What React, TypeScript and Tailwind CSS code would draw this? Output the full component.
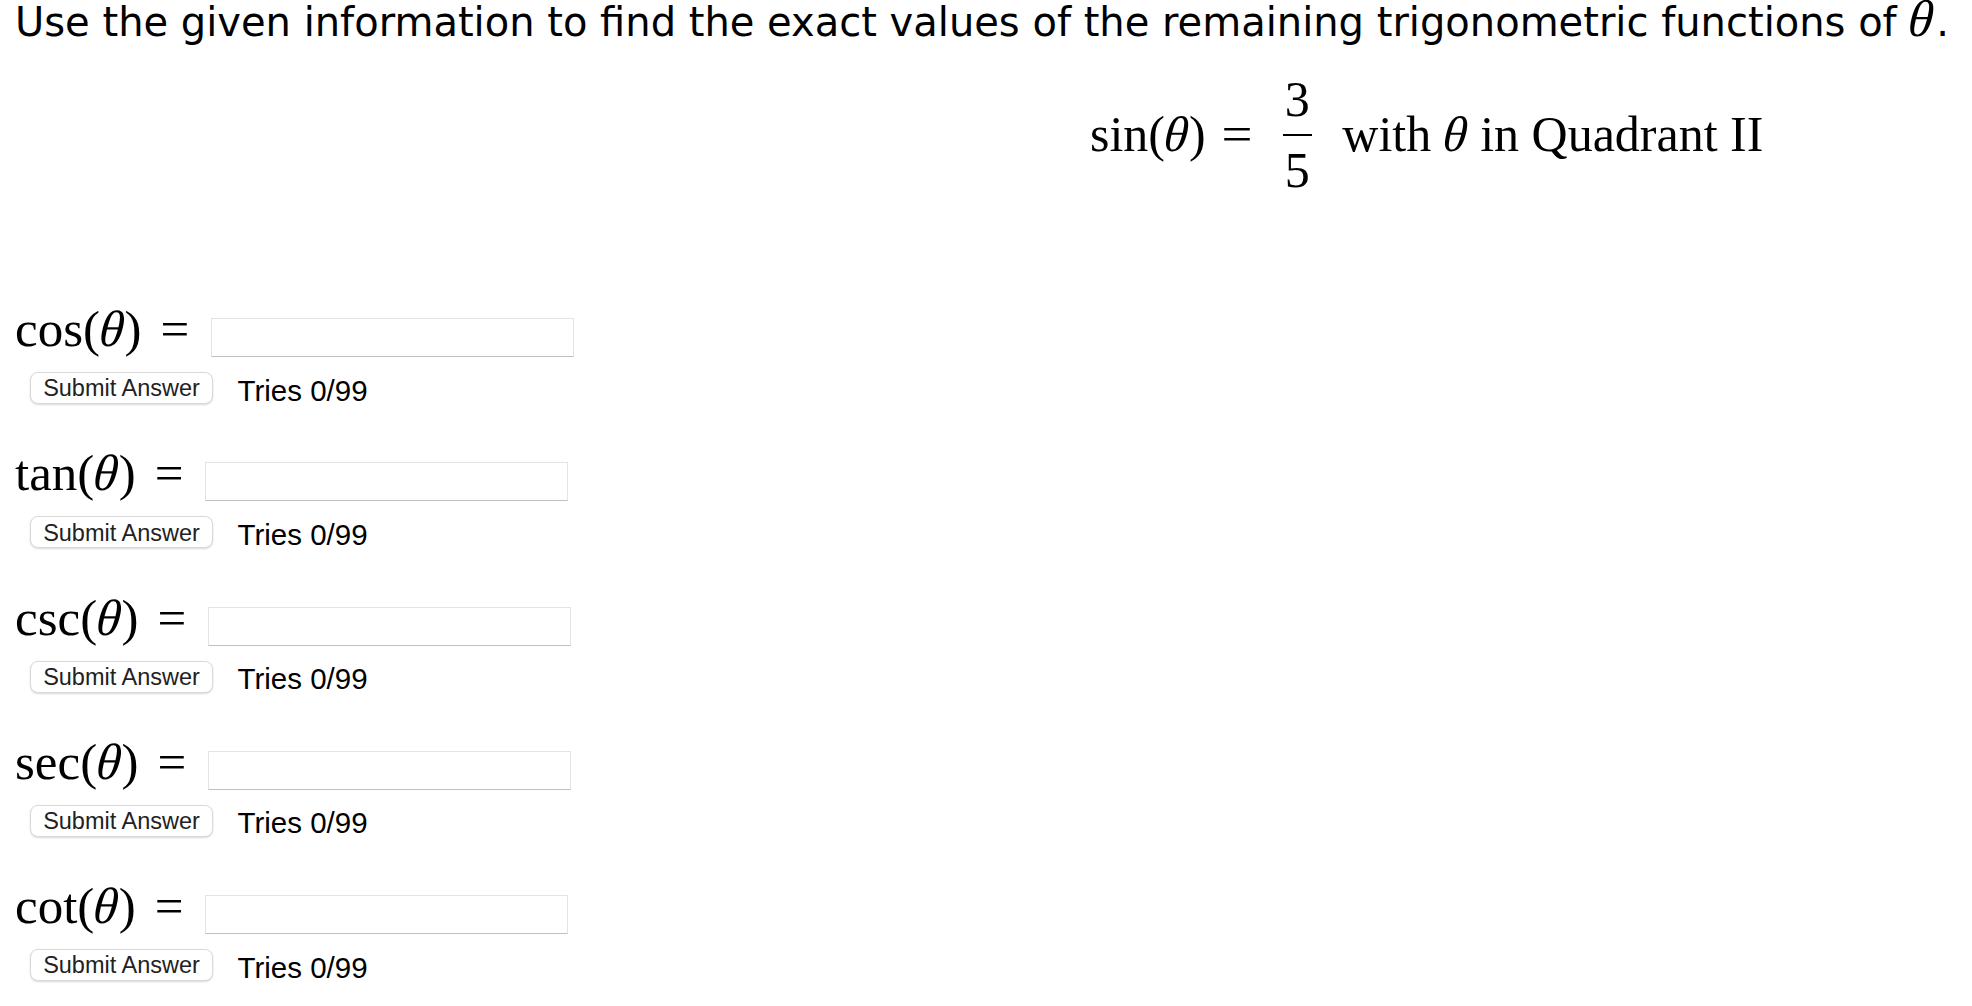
const fns = ["cos", "tan", "csc", "sec", "cot"];

// italic theta, slanted like the MathJax glyph
function Theta() {
  return <span className="inline-block -skew-x-[14deg] not-italic">θ</span>;
}

function AnswerRow({ fn }: { fn: string }) {
  return (
    <div className="flex flex-col">
      <div className="flex items-start">
        <span className="font-['Liberation_Serif',serif] text-[51px] leading-none whitespace-nowrap">
          {fn}(<Theta />)
        </span>
        <span className="ml-[19px] font-['Liberation_Serif',serif] text-[51px] leading-none">=</span>
        <input
          type="text"
          aria-label={`${fn}(θ)`}
          className="ml-[21.5px] mt-[14px] h-[39px] w-[363px] border border-[#e3e3e3] border-b-[#bfbfbf] bg-white outline-none"
        />
      </div>
      <div className="mt-[15px] ml-[15px] flex items-start">
        <button
          type="button"
          className="flex h-[32px] w-[183px] items-center justify-center rounded-[8px] border border-[#d9d9d9] bg-white pt-[2px] font-['Liberation_Sans',sans-serif] text-[23.5px] leading-none text-[#222] shadow-[0_1px_2px_rgba(0,0,0,0.15)]"
        >
          Submit Answer
        </button>
        <span className="ml-[24.5px] mt-[3.5px] font-['Liberation_Sans',sans-serif] text-[29.5px] leading-none text-black">
          Tries 0/99
        </span>
      </div>
    </div>
  );
}

export default function App() {
  return (
    <div className="min-h-screen bg-white pl-[15px] text-black">
      <p className="whitespace-nowrap font-['DejaVu_Sans',sans-serif] text-[40px] leading-[44px]">
        Use the given information to find the exact values of the remaining trigonometric functions of{" "}
        <span className="mr-[2px] font-['Liberation_Serif',serif] text-[52px] leading-[0]">
          <Theta />
        </span>
        .
      </p>

      {/* given value */}
      <div className="ml-[1075px] mt-[30px] flex items-start font-['Liberation_Serif',serif] text-[50px] leading-none">
        <span className="mt-[35px] whitespace-nowrap">
          sin(<Theta />)
        </span>
        <span className="ml-[17px] mt-[35px] inline-block scale-x-110">=</span>
        <div className="ml-[32px] flex w-[29px] flex-col items-center">
          <span>3</span>
          <div className="mt-[9.5px] h-[2px] w-full bg-black" />
          <span className="mt-[9.5px]">5</span>
        </div>
        <span className="ml-[30.5px] mt-[35px] whitespace-nowrap">
          with <Theta /> in Quadrant II
        </span>
      </div>

      <div className="mt-[109px] flex flex-col gap-[43.3px]">
        {fns.map((fn) => (
          <AnswerRow key={fn} fn={fn} />
        ))}
      </div>
    </div>
  );
}
